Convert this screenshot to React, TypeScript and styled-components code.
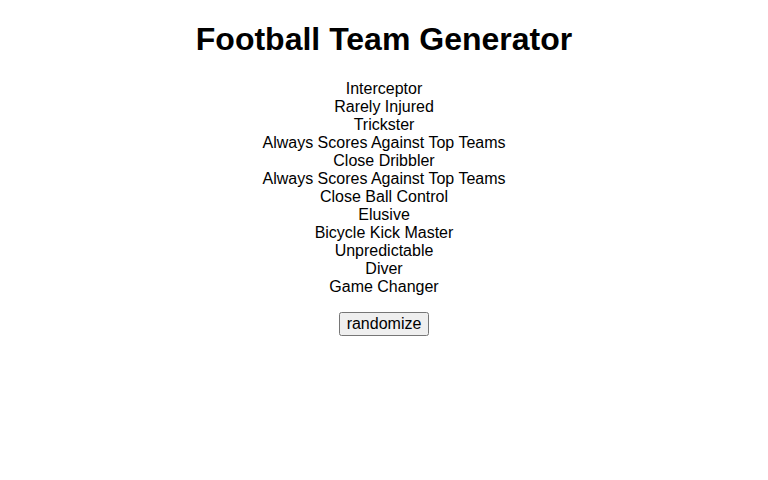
import React from 'react';
import styled, { createGlobalStyle } from 'styled-components';

const GlobalStyle = createGlobalStyle`
  body {
    margin: 0;
    background: #ffffff;
    color: #000000;
    font-family: "Liberation Sans", Arial, sans-serif;
  }
`

const Page = styled.div`
  text-align: center;
`

const Title = styled.h1`
  font-size: 32px;
  font-weight: bold;
  margin: 21.44px 0;
`

const TraitList = styled.ul`
  list-style: none;
  margin: 16px 0;
  padding: 0;
  font-size: 16px;
`

const Trait = styled.li`
  line-height: 18px;
`

const RandomizeButton = styled.button`
  font-family: "Liberation Sans", Arial, sans-serif;
  font-size: 16px;
`

const traits = [
  'Interceptor',
  'Rarely Injured',
  'Trickster',
  'Always Scores Against Top Teams',
  'Close Dribbler',
  'Always Scores Against Top Teams',
  'Close Ball Control',
  'Elusive',
  'Bicycle Kick Master',
  'Unpredictable',
  'Diver',
  'Game Changer',
]

const App = () => {
  const [list, setList] = React.useState(traits)

  const shuffle = () => {
    setList([...traits].sort(() => Math.random() - 0.5))
  }

  return (
    <Page>
      <GlobalStyle />
      <Title>Football Team Generator</Title>
      <TraitList>
        {list.map((item, i) => (
          <Trait key={i}>{item}</Trait>
        ))}
      </TraitList>
      <RandomizeButton onClick={shuffle}>randomize</RandomizeButton>
    </Page>
  )
}

export default App
